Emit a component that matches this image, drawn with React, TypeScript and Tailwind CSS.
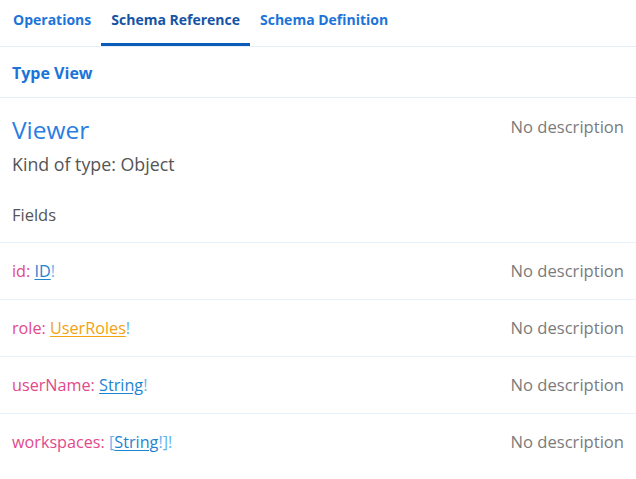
import React from "react";

const font = { fontFamily: '"Open Sans", "Noto Sans", sans-serif' };

function Row({ name, last, children }: { name: string; last?: boolean; children: React.ReactNode }) {
  return (
    <div className={last ? "flex h-[57px] items-center justify-between px-3" : "flex h-[57px] items-center justify-between border-b border-[#e6f1fb] px-3"}>
      <div className="text-[16.2px] text-[#e2498a]">
        {name}: {children}
      </div>
      <div className="text-[16.6px] text-[#7b7b7b]">No description</div>
    </div>
  );
}

export default function App() {
  return (
    <div className="h-[479px] w-[636px] bg-white" style={font}>
      <div className="flex h-[47px] border-b border-[#e3eef9] pl-[3px]">
        <div className="px-[10px] pt-[10px] text-[14px] leading-[20px] font-bold text-[#1c74d9]">Operations</div>
        <div className="flex flex-col justify-between px-[10px] pt-[10px]">
          <div className="text-[14px] leading-[20px] font-bold text-[#1553a6]">Schema Reference</div>
          <div className="-mx-[10px] h-[3px] bg-[#0b5cb8]" />
        </div>
        <div className="px-[10px] pt-[10px] text-[14px] leading-[20px] font-bold text-[#1c74d9]">Schema Definition</div>
      </div>
      <div className="flex h-[51px] items-center border-b border-[#e3eef9] px-3 pt-[2px] text-[16px] font-bold text-[#1c74d9]">
        Type View
      </div>
      <div className="border-b border-[#e6f1fb] px-3 pt-[17px] pb-[15px]">
        <div className="flex items-start justify-between">
          <div className="text-[24.5px] leading-[30px] text-[#2a7de3]">Viewer</div>
          <div className="text-[16.6px] leading-[24px] text-[#7b7b7b]">No description</div>
        </div>
        <div className="mt-[7px] text-[17.8px] leading-[24px] text-[#555]">Kind of type: Object</div>
        <div className="mt-[27px] text-[16.5px] leading-[24px] text-[#555]">Fields</div>
      </div>
      <Row name="id">
        <span className="text-[#1d84cf] underline underline-offset-2">ID</span>
        <span className="text-[#62b3ee]">!</span>
      </Row>
      <Row name="role">
        <span className="text-[#f2a30f] underline underline-offset-2">UserRoles</span>
        <span className="text-[#62b3ee]">!</span>
      </Row>
      <Row name="userName">
        <span className="text-[#1d84cf] underline underline-offset-2">String</span>
        <span className="text-[#62b3ee]">!</span>
      </Row>
      <Row name="workspaces" last>
        <span className="text-[#62b3ee]">[</span>
        <span className="text-[#1d84cf] underline underline-offset-2">String</span>
        <span className="text-[#62b3ee]">!]!</span>
      </Row>
    </div>
  );
}
